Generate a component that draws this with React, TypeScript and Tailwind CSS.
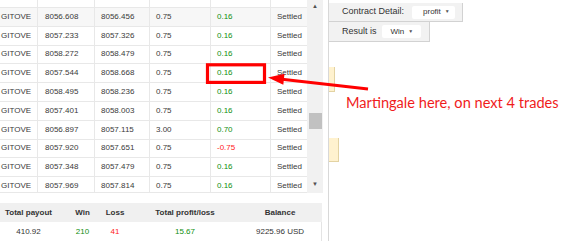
import React from 'react';

type Row = { entry: string; exit: string; stake: string; profit: string; shaded?: boolean };

const rows: Row[] = [
  { entry: '8055.945', exit: '8055.956', stake: '0.75', profit: '0.16' },
  { entry: '8056.608', exit: '8056.456', stake: '0.75', profit: '0.16', shaded: true },
  { entry: '8057.233', exit: '8057.326', stake: '0.75', profit: '0.16' },
  { entry: '8058.272', exit: '8058.479', stake: '0.75', profit: '0.16' },
  { entry: '8057.544', exit: '8058.668', stake: '0.75', profit: '0.16' },
  { entry: '8058.495', exit: '8058.236', stake: '0.75', profit: '0.16' },
  { entry: '8057.401', exit: '8058.003', stake: '0.75', profit: '0.16' },
  { entry: '8056.897', exit: '8057.115', stake: '3.00', profit: '0.70' },
  { entry: '8057.920', exit: '8057.651', stake: '0.75', profit: '-0.75' },
  { entry: '8057.348', exit: '8057.479', stake: '0.75', profit: '0.16' },
  { entry: '8057.969', exit: '8057.814', stake: '0.75', profit: '0.16' },
];

function TradeRow({ row, first }: { row: Row; first: boolean }) {
  const loss = row.profit.startsWith('-');
  return (
    <div
      className={`grid grid-cols-[38px_57px_55px_61px_60px_36px] h-[18.8px] border-b border-[#e8e8e8] ${
        row.shaded ? 'bg-[#f7f7f7]' : 'bg-white'
      } ${first ? 'mt-[-10.8px]' : ''}`}
    >
      <div className="flex items-center pl-[1px] border-r border-[#e8e8e8] overflow-hidden whitespace-nowrap">GITOVE</div>
      <div className="flex items-center pl-[7px] border-r border-[#e8e8e8]">{row.entry}</div>
      <div className="flex items-center pl-[6px] border-r border-[#e8e8e8]">{row.exit}</div>
      <div className="flex items-center pl-[6px] border-r border-[#e8e8e8]">{row.stake}</div>
      <div className={`flex items-center pl-[6px] border-r border-[#e8e8e8] ${loss ? 'text-[#ff1a1a]' : 'text-[#0f8f0f]'}`}>
        {row.profit}
      </div>
      <div className="flex items-center pl-[6px] overflow-hidden whitespace-nowrap">Settled</div>
    </div>
  );
}

function SelectBox({ label, width, pad }: { label: string; width: string; pad: string }) {
  return (
    <div className={`flex items-center h-[13px] bg-white rounded-[2px] text-[8px] text-[#333] ${width} ${pad}`}>
      <span>{label}</span>
      <span className="ml-[4px] text-[5px] text-[#555]">▼</span>
    </div>
  );
}

export default function App() {
  return (
    <div className="relative flex w-[584px] h-[241px] overflow-hidden bg-white font-['Liberation_Sans',Arial,sans-serif]">
      {/* left: trades table + summary */}
      <div className="w-[328px] flex flex-col shrink-0">
        <div className="flex h-[193px] w-[323px]">
          <div className="w-[307px] h-[193px] overflow-hidden text-[8px] text-[#3a3a3a] border-b border-[#e8e8e8]">
            {rows.map((r, i) => (
              <TradeRow key={i} row={r} first={i === 0} />
            ))}
          </div>
          <div className="w-[16px] h-[193px] bg-[#f1f1f1] flex flex-col items-center">
            <div className="mt-[2px] text-[6px] leading-[8px] text-[#505050]">▲</div>
            <div className="mt-[103px] ml-[1px] w-[13px] h-[16px] bg-[#c1c1c1]" />
            <div className="mt-[51px] text-[6px] leading-[8px] text-[#505050]">▼</div>
          </div>
        </div>

        <div className="mt-[10px] w-[322px] text-[8px]">
          <div className="grid grid-cols-[57px_51px_14px_126px_64px_10px] h-[19px] bg-[#f0f0f0] font-bold text-[#333]">
            <div className="flex items-center justify-center whitespace-nowrap">Total payout</div>
            <div className="flex items-center justify-center whitespace-nowrap">Win</div>
            <div className="flex items-center justify-center whitespace-nowrap">Loss</div>
            <div className="flex items-center justify-center whitespace-nowrap">Total profit/loss</div>
            <div className="flex items-center justify-center whitespace-nowrap">Balance</div>
            <div />
          </div>
          <div className="grid grid-cols-[57px_51px_14px_126px_64px_10px] h-[19px] bg-white border-r border-[#e4e4e4] text-[#333]">
            <div className="flex items-center justify-center whitespace-nowrap">410.92</div>
            <div className="flex items-center justify-center whitespace-nowrap text-[#0f8f0f]">210</div>
            <div className="flex items-center justify-center whitespace-nowrap text-[#ff1a1a]">41</div>
            <div className="flex items-center justify-center whitespace-nowrap text-[#0f8f0f]">15.67</div>
            <div className="flex items-center justify-center whitespace-nowrap">9225.96 USD</div>
            <div />
          </div>
        </div>
      </div>

      {/* right: workspace blocks */}
      <div className="flex-1 flex flex-col border-l border-[#d8d8d8]">
        <div className="mt-[3px] w-[134px] h-[19px] flex items-center pl-[13px] bg-[#f2f2f2] border-r border-b border-[#d2d2d2] text-[9px] text-[#333]">
          <span>Contract Detail:</span>
          <div className="ml-[8px]">
            <SelectBox label="profit" width="w-[43px]" pad="pl-[11px]" />
          </div>
        </div>
        <div className="w-[101px] h-[20px] flex items-center pl-[13px] bg-[#f2f2f2] border-r border-b border-[#d2d2d2] text-[9px] text-[#333]">
          <span>Result is</span>
          <div className="ml-[5px]">
            <SelectBox label="Win" width="w-[39px]" pad="pl-[9px]" />
          </div>
        </div>
        <div className="mt-[25px] w-[6px] h-[25px] bg-[#fff2cf] border-r border-b border-[#e3d3a3]" />
        <div className="mt-[46px] w-[10px] h-[24px] bg-[#fff2cf] border-r border-b border-[#e3d3a3]" />
      </div>

      {/* annotation overlay */}
      <svg className="absolute inset-0 pointer-events-none" width="584" height="241" viewBox="0 0 584 241">
        <rect x="207.5" y="64.8" width="57" height="17.6" fill="none" stroke="#ff0000" strokeWidth="3.2" />
        <line x1="282" y1="79.2" x2="368" y2="89" stroke="#ff0000" strokeWidth="3" />
        <polygon points="268,77.5 283.3,84.8 284.5,73.8" fill="#ff0000" />
      </svg>
      <div className="absolute left-[346px] top-[95px] text-[14.6px] leading-[16px] text-[#f01c1c] whitespace-nowrap font-['Lato',sans-serif]">
        Martingale here, on next 4 trades
      </div>
    </div>
  );
}
